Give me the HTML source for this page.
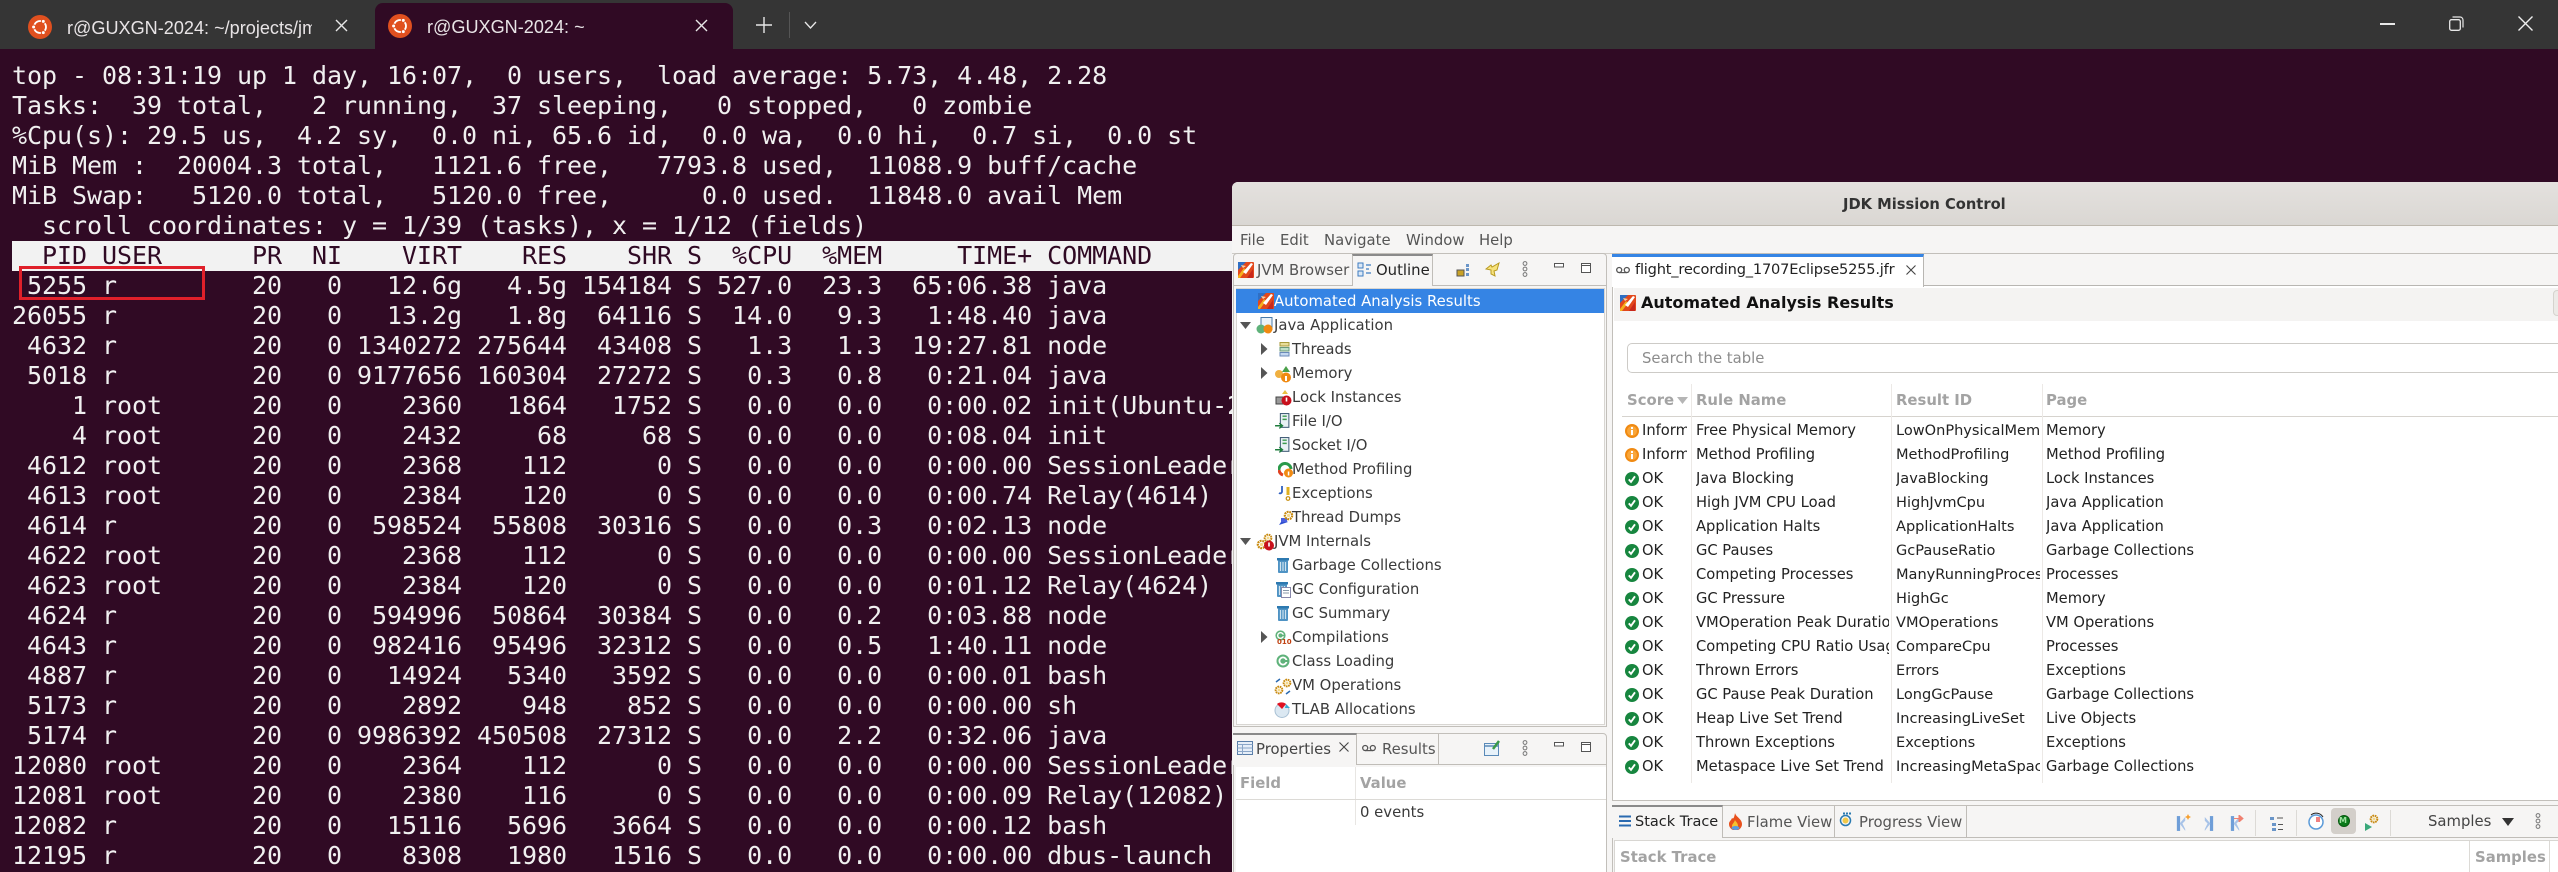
<!DOCTYPE html>
<html><head><meta charset="utf-8"><title>top - JDK Mission Control</title>
<style>
html,body{margin:0;padding:0;width:2558px;height:862px;overflow:hidden;background:#300a24}
*{box-sizing:border-box}
.abs,.t,svg.i{position:absolute}
#tabs{position:absolute;left:0;top:0;width:2558px;height:49px;background:#353535}
#tab2{position:absolute;left:375px;top:3px;width:358px;height:47px;background:#300a24;border-radius:8px 8px 0 0}
.tt{position:absolute;top:14px;font:18.1px/28px "Liberation Sans",sans-serif;color:#e8e4e6;white-space:pre;overflow:hidden}
#term{position:absolute;left:12px;top:61px;margin:0;font:25px/30px "DejaVu Sans Mono","Liberation Mono",monospace;letter-spacing:-.05px;color:#f0f0f0;white-space:pre}
#term b{font-weight:400;display:inline-block;width:1225px;height:30px;background:#f2f2f2;color:#300a24;vertical-align:top}
#redbox{position:absolute;left:19px;top:266px;width:186px;height:34px;border:3px solid #e0202a}
#win{position:absolute;left:1232px;top:182px;width:1326px;height:690px;background:#f6f5f4;overflow:hidden;border-top-left-radius:6px}
.t{font:14.85px/24px "DejaVu Sans",sans-serif;white-space:pre;color:#3a3a3a}
.h{font-weight:700;color:#a3a3a3}
.line{position:absolute;background:#c0bdb8}
.w{position:absolute;background:#fff}
.clip{overflow:hidden}
.tb{color:#222}
</style></head><body>
<svg width="0" height="0" style="position:absolute">
<defs>
<symbol id="ub" viewBox="0 0 24 24"><circle cx="12" cy="12" r="12" fill="#e0501f"/><circle cx="12" cy="12" r="6" fill="none" stroke="#fff" stroke-width="1.8"/><circle cx="5.6" cy="12" r="2" fill="#fff" stroke="#e0501f"/><circle cx="15.3" cy="6.4" r="2" fill="#fff" stroke="#e0501f"/><circle cx="15.3" cy="17.6" r="2" fill="#fff" stroke="#e0501f"/></symbol>
<symbol id="ok" viewBox="0 0 14 14"><circle cx="7" cy="7" r="7" fill="#17863f"/><path d="M3.8 7.4l2.2 2.5 4-5.6" fill="none" stroke="#fff" stroke-width="1.9"/></symbol>
<symbol id="inf" viewBox="0 0 14 14"><circle cx="7" cy="7" r="7" fill="#f08a12"/><circle cx="7" cy="7" r="5" fill="#f9a63a"/><rect x="6" y="6" width="2" height="5" fill="#fff"/><rect x="6" y="3" width="2" height="2" fill="#fff"/></symbol>
<symbol id="rk" viewBox="0 0 16 16"><rect width="16" height="16" rx="1" fill="#e2481c"/><path d="M0 0h8L0 8z" fill="#2f6fc4"/><path d="M0 14L6 6l2 2-6 8H0z" fill="#f6b01c"/><path d="M5 10l8-9 2 1-7 10z" fill="#fff"/><path d="M9 16l6-9v9z" fill="#c8281c"/><path d="M3 3l5 1-3 2z" fill="#f6d0a0"/></symbol>
<symbol id="tape" viewBox="0 0 14 8"><circle cx="3.2" cy="4" r="2.5" fill="none" stroke="#555" stroke-width="1.3"/><circle cx="10.8" cy="4" r="2.5" fill="none" stroke="#555" stroke-width="1.3"/><path d="M3 6.6h8" stroke="#555" stroke-width="1.2"/></symbol>
<symbol id="dots" viewBox="0 0 6 16"><circle cx="3" cy="2.5" r="1.9" fill="none" stroke="#777"/><circle cx="3" cy="8" r="1.9" fill="none" stroke="#777"/><circle cx="3" cy="13.5" r="1.9" fill="none" stroke="#777"/></symbol>
<symbol id="min" viewBox="0 0 10 5"><rect x=".5" y=".5" width="9" height="3.5" fill="#fff" stroke="#555"/></symbol>
<symbol id="max" viewBox="0 0 10 10"><rect x=".5" y=".5" width="9" height="9" fill="#fff" stroke="#555"/><path d="M.5 2.5h9" stroke="#555"/></symbol>
<symbol id="gc" viewBox="0 0 14 16"><rect x="2" y="3" width="10" height="13" rx="1" fill="#4f93c4"/><path d="M4.5 5v9M7 5v9M9.5 5v9" stroke="#cfe3ef" stroke-width="1.2"/><rect x="1" y="1" width="12" height="2.5" fill="#2d79b0"/></symbol>
<symbol id="gear" viewBox="0 0 12 12"><circle cx="6" cy="6" r="4" fill="none" stroke="#c88a10" stroke-width="2.4" stroke-dasharray="2 .8"/><circle cx="6" cy="6" r="1.8" fill="#f4d98a"/></symbol>
<symbol id="cl" viewBox="0 0 14 14"><circle cx="7" cy="7" r="6.5" fill="#5fb27a"/><circle cx="7" cy="7" r="3.6" fill="none" stroke="#fff" stroke-width="1.8"/><rect x="8" y="6" width="4" height="2" fill="#5fb27a"/></symbol>
<symbol id="file" viewBox="0 0 14 16"><rect x="5" y="0.5" width="8" height="13" fill="#e8f0f4" stroke="#45607a"/><path d="M7 3h4M7 6h4" stroke="#3c9b4e" stroke-width="1.4"/><path d="M0 12h7M4 9.5L7 12l-3 2.500" fill="none" stroke="#1e7d3c" stroke-width="1.3"/></symbol>
<symbol id="k" viewBox="0 0 14 20"><path d="M2 2h3.500v16H2z" fill="#6f9ed8"/><path d="M5 10l6-7v4l-3 3 3 6v2z" fill="#a8c3e8"/></symbol>
</defs></svg>

<div id="tabs">
 <div id="tab2"></div>
 <svg class="i" style="left:28px;top:15px" width="24" height="24"><use href="#ub"/></svg>
 <div class="tt" style="left:67px;width:245px">r@GUXGN-2024: ~/projects/jmc</div>
 <svg class="i" style="left:335px;top:19px" width="13" height="13"><path d="M1 1l11 11M12 1L1 12" stroke="#e8e8e8" stroke-width="1.4"/></svg>
 <svg class="i" style="left:388px;top:14px" width="24" height="24"><use href="#ub"/></svg>
 <div class="tt" style="left:427px;top:13px;width:200px">r@GUXGN-2024: ~</div>
 <svg class="i" style="left:695px;top:19px" width="13" height="13"><path d="M1 1l11 11M12 1L1 12" stroke="#e8e8e8" stroke-width="1.4"/></svg>
 <svg class="i" style="left:756px;top:17px" width="16" height="16"><path d="M8 0v16M0 8h16" stroke="#e8e8e8" stroke-width="1.4"/></svg>
 <div class="abs" style="left:789px;top:12px;width:1px;height:26px;background:#555"></div>
 <svg class="i" style="left:804px;top:21px" width="13" height="8"><path d="M1 1l5.500 6L12 1" fill="none" stroke="#e8e8e8" stroke-width="1.3"/></svg>
 <div class="abs" style="left:2380px;top:23px;width:15px;height:1.500px;background:#e8e8e8"></div>
 <svg class="i" style="left:2449px;top:16px" width="15" height="15"><rect x=".7" y="3.700" width="10.600" height="10.600" rx="1.800" fill="none" stroke="#e8e8e8" stroke-width="1.300"/><path d="M3.500 1h7.500a3 3 0 0 1 3 3v7.500" fill="none" stroke="#e8e8e8" stroke-width="1.200"/></svg>
 <svg class="i" style="left:2518px;top:16px" width="15" height="15"><path d="M.5.500l14 14M14.500.500l-14 14" stroke="#eee" stroke-width="1.400"/></svg>
</div>

<pre id="term">top - 08:31:19 up 1 day, 16:07,  0 users,  load average: 5.73, 4.48, 2.28
Tasks:  39 total,   2 running,  37 sleeping,   0 stopped,   0 zombie
%Cpu(s): 29.5 us,  4.2 sy,  0.0 ni, 65.6 id,  0.0 wa,  0.0 hi,  0.7 si,  0.0 st
MiB Mem :  20004.3 total,   1121.6 free,   7793.8 used,  11088.9 buff/cache
MiB Swap:   5120.0 total,   5120.0 free,      0.0 used.  11848.0 avail Mem
  scroll coordinates: y = 1/39 (tasks), x = 1/12 (fields)
<b>  PID USER      PR  NI    VIRT    RES    SHR S  %CPU  %MEM     TIME+ COMMAND</b>
 5255 r         20   0   12.6g   4.5g 154184 S 527.0  23.3  65:06.38 java
26055 r         20   0   13.2g   1.8g  64116 S  14.0   9.3   1:48.40 java
 4632 r         20   0 1340272 275644  43408 S   1.3   1.3  19:27.81 node
 5018 r         20   0 9177656 160304  27272 S   0.3   0.8   0:21.04 java
    1 root      20   0    2360   1864   1752 S   0.0   0.0   0:00.02 init(Ubuntu-2
    4 root      20   0    2432     68     68 S   0.0   0.0   0:08.04 init
 4612 root      20   0    2368    112      0 S   0.0   0.0   0:00.00 SessionLeader
 4613 root      20   0    2384    120      0 S   0.0   0.0   0:00.74 Relay(4614)
 4614 r         20   0  598524  55808  30316 S   0.0   0.3   0:02.13 node
 4622 root      20   0    2368    112      0 S   0.0   0.0   0:00.00 SessionLeader
 4623 root      20   0    2384    120      0 S   0.0   0.0   0:01.12 Relay(4624)
 4624 r         20   0  594996  50864  30384 S   0.0   0.2   0:03.88 node
 4643 r         20   0  982416  95496  32312 S   0.0   0.5   1:40.11 node
 4887 r         20   0   14924   5340   3592 S   0.0   0.0   0:00.01 bash
 5173 r         20   0    2892    948    852 S   0.0   0.0   0:00.00 sh
 5174 r         20   0 9986392 450508  27312 S   0.0   2.2   0:32.06 java
12080 root      20   0    2364    112      0 S   0.0   0.0   0:00.00 SessionLeader
12081 root      20   0    2380    116      0 S   0.0   0.0   0:00.09 Relay(12082)
12082 r         20   0   15116   5696   3664 S   0.0   0.0   0:00.12 bash
12195 r         20   0    8308   1980   1516 S   0.0   0.0   0:00.00 dbus-launch</pre>
<div id="redbox"></div>

<div id="win">
 <!-- coordinates inside: x-1232, y-182 -->
 <div class="abs" style="left:0;top:0;width:1326px;height:44px;background:linear-gradient(#e4e1de,#dad7d3);border-bottom:1px solid #bdb8ae"></div>
 <div class="t" style="left:611px;top:11px;font-weight:700;color:#333;font-size:14.7px">JDK Mission Control</div>
 <div class="t" style="left:8px;top:46px;color:#555">File</div>
 <div class="t" style="left:48px;top:46px;color:#555">Edit</div>
 <div class="t" style="left:92px;top:46px;color:#555">Navigate</div>
 <div class="t" style="left:174px;top:46px;color:#555">Window</div>
 <div class="t" style="left:247px;top:46px;color:#555">Help</div>
 <div class="line" style="left:0;top:71px;width:1326px;height:1px;background:#cfccc7"></div>

 <!-- top-left panel -->
 <div class="abs" style="left:1px;top:71px;width:374px;height:474px;border:1px solid #c2bfba;border-radius:4px 4px 0 0"></div>
 <div class="line" style="left:1px;top:103px;width:374px;height:1px"></div>
 <svg class="i" style="left:6px;top:80px" width="16" height="16"><use href="#rk"/></svg>
 <div class="t" style="left:25px;top:76px;color:#555">JVM Browser</div>
 <div class="abs" style="left:120px;top:72px;width:81px;height:32px;background:#f6f5f4;border-right:1px solid #c0bdb8;border-left:1px solid #c0bdb8;border-top:2px solid #8a8a8a"></div>
 <svg class="i" style="left:125px;top:80px" width="15" height="16"><path d="M1 1h5v5H1zM1 9h5v5H1z" fill="#dbe8f6" stroke="#3d7cc0"/><path d="M9 3h5M9 11h5M9 7h3" stroke="#3d7cc0" stroke-width="1.200"/></svg>
 <div class="t" style="left:144px;top:76px;color:#222">Outline</div>
 <svg class="i" style="left:224px;top:80px" width="16" height="16"><rect x="1" y="8" width="7" height="6" fill="#c9a227" stroke="#555"/><path d="M10 2h3v3h-3zM10 6h3v3h-3zM10 11h3v3h-3z" fill="#6a95c8"/></svg>
 <svg class="i" style="left:253px;top:80px" width="16" height="15"><path d="M1 7l5-4 1 2 7-4-2 7-3 1 1 5-4-2 0-4z" fill="#f7e27c" stroke="#b89a20"/></svg>
 <svg class="i" style="left:290px;top:79px" width="6" height="16"><use href="#dots"/></svg>
 <svg class="i" style="left:322px;top:81px" width="10" height="5"><use href="#min"/></svg>
 <svg class="i" style="left:349px;top:81px" width="10" height="10"><use href="#max"/></svg>

 <div class="w" style="left:4px;top:106px;width:369px;height:437px;border:1px solid #d8d6d2"></div>
 <div class="abs" style="left:4px;top:107px;width:368px;height:24px;background:#3584e4"></div>
 <svg class="i" style="left:26px;top:111px" width="16" height="16"><use href="#rk"/></svg>
 <div class="t" style="left:42px;top:107px;color:#fff">Automated Analysis Results</div>

 <svg class="i" style="left:8px;top:140px" width="12" height="7"><path d="M0 0h11L5.500 7z" fill="#555"/></svg>
 <svg class="i" style="left:24px;top:135px" width="17" height="17"><rect x="5" y="0.500" width="11" height="12" fill="#eaf2f8" stroke="#4a7aa8"/><circle cx="5" cy="12" r="4.500" fill="#5fb27a"/><circle cx="12" cy="12" r="4.500" fill="#f08a12"/></svg>
 <div class="t" style="left:42px;top:131px">Java Application</div>

 <svg class="i" style="left:29px;top:161px" width="7" height="12"><path d="M0 0l6.500 6L0 12z" fill="#555"/></svg>
 <svg class="i" style="left:47px;top:160px" width="13" height="15"><rect x="1" y="0.500" width="9" height="3.500" fill="#e8dd9a" stroke="#a89a3a"/><rect x="1" y="5.500" width="9" height="3.500" fill="#bfe0c8" stroke="#6a9a7a"/><rect x="1" y="10.500" width="9" height="3.500" fill="#c4d8f0" stroke="#6a8ab8"/></svg>
 <div class="t" style="left:60px;top:155px">Threads</div>

 <svg class="i" style="left:29px;top:185px" width="7" height="12"><path d="M0 0l6.500 6L0 12z" fill="#555"/></svg>
 <svg class="i" style="left:42px;top:183px" width="18" height="18"><circle cx="5" cy="9" r="4" fill="#f0b040"/><path d="M8 7l4-6 4 6z" fill="#4aa04a"/><circle cx="12" cy="12.500" r="5" fill="#f08a12"/><rect x="11" y="11" width="2" height="5" fill="#fff"/></svg>
 <div class="t" style="left:60px;top:179px">Memory</div>

 <svg class="i" style="left:43px;top:207px" width="17" height="17"><rect x="1" y="8" width="8" height="7" fill="#999" stroke="#444"/><path d="M7 5l3-4 3 4z" fill="#e8c040"/><circle cx="11.500" cy="11.500" r="5" fill="#c8101c"/><rect x="10.700" y="8.500" width="1.600" height="4" fill="#fff"/></svg>
 <div class="t" style="left:60px;top:203px">Lock Instances</div>

 <svg class="i" style="left:43px;top:231px" width="15" height="17"><use href="#file"/></svg>
 <div class="t" style="left:60px;top:227px">File I/O</div>
 <svg class="i" style="left:43px;top:255px" width="15" height="17"><use href="#file"/></svg>
 <div class="t" style="left:60px;top:251px">Socket I/O</div>

 <svg class="i" style="left:46px;top:280px" width="15" height="16"><path d="M1 8a6 6 0 0 1 12-1" fill="none" stroke="#2a9a4a" stroke-width="3"/><path d="M1 8a6 6 0 0 0 4 5" fill="none" stroke="#e04020" stroke-width="3"/><circle cx="10.500" cy="11" r="4.500" fill="#f08a12"/><rect x="9.800" y="9.500" width="1.500" height="4" fill="#fff"/></svg>
 <div class="t" style="left:60px;top:275px">Method Profiling</div>

 <svg class="i" style="left:46px;top:302px" width="14" height="18"><path d="M4 2v6a2 2 0 0 1-3 1" fill="none" stroke="#3060c0" stroke-width="1.800"/><path d="M10 3v8" stroke="#e0b020" stroke-width="3"/><circle cx="10" cy="14.500" r="1.800" fill="none" stroke="#c89010" stroke-width="1.200"/></svg>
 <div class="t" style="left:60px;top:299px">Exceptions</div>

 <svg class="i" style="left:46px;top:328px" width="16" height="16"><path d="M1 15l4-6 5 3z" fill="#3050d0"/><rect x="3" y="8" width="6" height="4" fill="#4a60e0"/><g transform="translate(5 0)"><svg width="11" height="11"><use href="#gear"/></svg></g></svg>
 <div class="t" style="left:60px;top:323px">Thread Dumps</div>

 <svg class="i" style="left:8px;top:356px" width="12" height="7"><path d="M0 0h11L5.500 7z" fill="#555"/></svg>
 <svg class="i" style="left:24px;top:351px" width="18" height="18"><g transform="translate(0 6)"><svg width="11" height="11"><use href="#gear"/></svg></g><g transform="translate(7 0)"><svg width="10" height="10"><use href="#gear"/></svg></g><circle cx="13" cy="12.500" r="5" fill="#c8101c"/><rect x="12.200" y="9.500" width="1.600" height="4" fill="#fff"/></svg>
 <div class="t" style="left:42px;top:347px">JVM Internals</div>

 <svg class="i" style="left:44px;top:375px" width="14" height="16"><use href="#gc"/></svg>
 <div class="t" style="left:60px;top:371px">Garbage Collections</div>
 <svg class="i" style="left:43px;top:399px" width="14" height="16"><use href="#gc"/></svg>
 <svg class="i" style="left:49px;top:405px" width="10" height="11"><rect x=".5" y=".5" width="9" height="10" fill="#fff" stroke="#88a"/><path d="M2 3.500h6M2 6h6" stroke="#89a"/></svg>
 <div class="t" style="left:60px;top:395px">GC Configuration</div>
 <svg class="i" style="left:44px;top:423px" width="14" height="16"><use href="#gc"/></svg>
 <div class="t" style="left:60px;top:419px">GC Summary</div>

 <svg class="i" style="left:29px;top:449px" width="7" height="12"><path d="M0 0l6.500 6L0 12z" fill="#555"/></svg>
 <svg class="i" style="left:43px;top:448px" width="11" height="11"><use href="#cl"/></svg>
 <div class="t" style="left:45px;top:456px;font:700 7px/9px 'DejaVu Sans',sans-serif;color:#c04010">010</div>
 <div class="t" style="left:60px;top:443px">Compilations</div>

 <svg class="i" style="left:44px;top:472px" width="14" height="14"><use href="#cl"/></svg>
 <div class="t" style="left:60px;top:467px">Class Loading</div>

 <svg class="i" style="left:42px;top:496px" width="18" height="18"><g transform="translate(0 7)"><svg width="10" height="10"><use href="#gear"/></svg></g><g transform="translate(8 0)"><svg width="10" height="10"><use href="#gear"/></svg></g><path d="M2 4l4-3M12 16l4-3" stroke="#2a6ab0" stroke-width="1.500"/></svg>
 <div class="t" style="left:60px;top:491px">VM Operations</div>

 <svg class="i" style="left:42px;top:519px" width="17" height="17"><circle cx="8" cy="9.500" r="7" fill="#dbe8f2" stroke="#a8c0d4"/><path d="M3 3a7 7 0 0 1 9 0L8 8z" fill="#e01020"/><path d="M12 3l4 4h-5z" fill="#3aa8d0"/></svg>
 <div class="t" style="left:60px;top:515px">TLAB Allocations</div>

 <!-- bottom-left panel -->
 <div class="abs" style="left:1px;top:551px;width:374px;height:150px;border:1px solid #c2bfba;border-radius:4px 4px 0 0"></div>
 <div class="line" style="left:1px;top:582px;width:374px;height:1px"></div>
 <div class="abs" style="left:1px;top:551px;width:124px;height:32px;border-top:2px solid #8a8a8a;border-right:1px solid #c0bdb8;background:#f6f5f4"></div>
 <svg class="i" style="left:5px;top:559px" width="16" height="14"><rect x=".5" y=".5" width="15" height="13" fill="#e6eef8" stroke="#5a7ea8"/><path d="M.5 3.500h15M5.500 3.500v10M.5 7h15M.5 10.500h15" stroke="#8aa6c8"/></svg>
 <div class="t" style="left:24px;top:555px;color:#444">Properties</div>
 <svg class="i" style="left:107px;top:560px" width="10" height="10"><path d="M.5.500l9 9M9.500.500l-9 9" stroke="#444" stroke-width="1.100"/></svg>
 <svg class="i" style="left:130px;top:562px" width="14" height="8"><use href="#tape"/></svg>
 <div class="t" style="left:150px;top:555px;color:#555">Results</div>
 <div class="abs" style="left:206px;top:552px;width:1px;height:31px;background:#c0bdb8"></div>
 <svg class="i" style="left:252px;top:558px" width="17" height="16"><rect x=".5" y="3.500" width="14" height="12" fill="#e8f2fa" stroke="#5a8ab8"/><path d="M.5 6h14" stroke="#5a8ab8" stroke-width="1.500"/><path d="M9 9l6-8" stroke="#3a9a4a" stroke-width="2.500"/></svg>
 <svg class="i" style="left:290px;top:558px" width="6" height="16"><use href="#dots"/></svg>
 <svg class="i" style="left:322px;top:560px" width="10" height="5"><use href="#min"/></svg>
 <svg class="i" style="left:349px;top:560px" width="10" height="10"><use href="#max"/></svg>

 <div class="w" style="left:4px;top:585px;width:370px;height:105px"></div>
 <div class="t h" style="left:8px;top:589px">Field</div>
 <div class="t h" style="left:128px;top:589px">Value</div>
 <div class="abs" style="left:123px;top:585px;width:1px;height:58px;background:#e8e6e3"></div>
 <div class="abs" style="left:4px;top:617px;width:370px;height:1px;background:#dcdad6"></div>
 <div class="t" style="left:128px;top:618px">0 events</div>

 <!-- editor panel -->
 <div class="abs" style="left:380px;top:71px;width:946px;height:548px;border:1px solid #c2bfba;background:#fff;border-right:0"></div>
 <div class="abs" style="left:381px;top:72px;width:945px;height:32px;background:#f6f5f4;border-bottom:1px solid #b8b6b2"></div>
 <div class="abs" style="left:380px;top:72px;width:312px;height:33px;background:#fff;border-right:1px solid #b8b6b2;border-top:3px solid #3584e4"></div>
 <svg class="i" style="left:384px;top:84px" width="14" height="8"><use href="#tape"/></svg>
 <div class="t tb" style="left:403px;top:76px;font-size:14.6px;letter-spacing:-.2px">flight_recording_1707Eclipse5255.jfr</div>
 <svg class="i" style="left:674px;top:83px" width="10" height="10"><path d="M.5.500l9 9M9.500.500l-9 9" stroke="#444" stroke-width="1.100"/></svg>

 <div class="abs" style="left:382px;top:106px;width:944px;height:33px;background:#f4f3f2"></div>
 <div class="abs" style="left:1321px;top:108px;width:10px;height:26px;border:1px solid #d5d3ce;border-radius:4px;background:#eceae7"></div>
 <svg class="i" style="left:388px;top:113px" width="16" height="16"><use href="#rk"/></svg>
 <div class="t" style="left:409px;top:109px;font-weight:700;color:#111;font-size:16px">Automated Analysis Results</div>

 <div class="abs" style="left:395px;top:161px;width:940px;height:30px;border:1px solid #cdcbc7;border-radius:5px;background:#fff"></div>
 <div class="t" style="left:410px;top:164px;color:#8c8c8c">Search the table</div>

 <div class="t h" style="left:395px;top:206px">Score</div>
 <svg class="i" style="left:445px;top:215px" width="12" height="7"><path d="M0 0h11L5.500 7z" fill="#b5b5b5"/></svg>
 <div class="t h" style="left:464px;top:206px">Rule Name</div>
 <div class="t h" style="left:664px;top:206px">Result ID</div>
 <div class="t h" style="left:814px;top:206px">Page</div>
 <div class="abs" style="left:390px;top:234px;width:936px;height:1px;background:#d6d3ce"></div>
 <div class="abs" style="left:459px;top:202px;width:1px;height:399px;background:#ece9e6"></div>
 <div class="abs" style="left:659px;top:202px;width:1px;height:399px;background:#ece9e6"></div>
 <div class="abs" style="left:810px;top:202px;width:1px;height:399px;background:#ece9e6"></div>

 <div id="rows" style="position:absolute;left:0;top:0">
<style>
#rows div{position:absolute;font:14.7px/24px "DejaVu Sans",sans-serif;color:#222;white-space:pre;overflow:hidden;height:24px}
#rows .s{left:410px;width:45px}#rows .n{left:464px;width:193px}#rows .d{left:664px;width:144px;font-size:14.55px}#rows .p{left:814px;width:300px}
#rows svg{position:absolute;left:393px}
</style>
<svg style="top:242px" width="14" height="14"><use href="#inf"/></svg><div class="s" style="top:237px">Information</div><div class="n" style="top:237px">Free Physical Memory</div><div class="d" style="top:237px">LowOnPhysicalMemory</div><div class="p" style="top:237px">Memory</div>
<svg style="top:266px" width="14" height="14"><use href="#inf"/></svg><div class="s" style="top:261px">Information</div><div class="n" style="top:261px">Method Profiling</div><div class="d" style="top:261px">MethodProfiling</div><div class="p" style="top:261px">Method Profiling</div>
<svg style="top:290px" width="14" height="14"><use href="#ok"/></svg><div class="s" style="top:285px">OK</div><div class="n" style="top:285px">Java Blocking</div><div class="d" style="top:285px">JavaBlocking</div><div class="p" style="top:285px">Lock Instances</div>
<svg style="top:314px" width="14" height="14"><use href="#ok"/></svg><div class="s" style="top:309px">OK</div><div class="n" style="top:309px">High JVM CPU Load</div><div class="d" style="top:309px">HighJvmCpu</div><div class="p" style="top:309px">Java Application</div>
<svg style="top:338px" width="14" height="14"><use href="#ok"/></svg><div class="s" style="top:333px">OK</div><div class="n" style="top:333px">Application Halts</div><div class="d" style="top:333px">ApplicationHalts</div><div class="p" style="top:333px">Java Application</div>
<svg style="top:362px" width="14" height="14"><use href="#ok"/></svg><div class="s" style="top:357px">OK</div><div class="n" style="top:357px">GC Pauses</div><div class="d" style="top:357px">GcPauseRatio</div><div class="p" style="top:357px">Garbage Collections</div>
<svg style="top:386px" width="14" height="14"><use href="#ok"/></svg><div class="s" style="top:381px">OK</div><div class="n" style="top:381px">Competing Processes</div><div class="d" style="top:381px">ManyRunningProcesses</div><div class="p" style="top:381px">Processes</div>
<svg style="top:410px" width="14" height="14"><use href="#ok"/></svg><div class="s" style="top:405px">OK</div><div class="n" style="top:405px">GC Pressure</div><div class="d" style="top:405px">HighGc</div><div class="p" style="top:405px">Memory</div>
<svg style="top:434px" width="14" height="14"><use href="#ok"/></svg><div class="s" style="top:429px">OK</div><div class="n" style="top:429px">VMOperation Peak Duration</div><div class="d" style="top:429px">VMOperations</div><div class="p" style="top:429px">VM Operations</div>
<svg style="top:458px" width="14" height="14"><use href="#ok"/></svg><div class="s" style="top:453px">OK</div><div class="n" style="top:453px">Competing CPU Ratio Usage</div><div class="d" style="top:453px">CompareCpu</div><div class="p" style="top:453px">Processes</div>
<svg style="top:482px" width="14" height="14"><use href="#ok"/></svg><div class="s" style="top:477px">OK</div><div class="n" style="top:477px">Thrown Errors</div><div class="d" style="top:477px">Errors</div><div class="p" style="top:477px">Exceptions</div>
<svg style="top:506px" width="14" height="14"><use href="#ok"/></svg><div class="s" style="top:501px">OK</div><div class="n" style="top:501px">GC Pause Peak Duration</div><div class="d" style="top:501px">LongGcPause</div><div class="p" style="top:501px">Garbage Collections</div>
<svg style="top:530px" width="14" height="14"><use href="#ok"/></svg><div class="s" style="top:525px">OK</div><div class="n" style="top:525px">Heap Live Set Trend</div><div class="d" style="top:525px">IncreasingLiveSet</div><div class="p" style="top:525px">Live Objects</div>
<svg style="top:554px" width="14" height="14"><use href="#ok"/></svg><div class="s" style="top:549px">OK</div><div class="n" style="top:549px">Thrown Exceptions</div><div class="d" style="top:549px">Exceptions</div><div class="p" style="top:549px">Exceptions</div>
<svg style="top:578px" width="14" height="14"><use href="#ok"/></svg><div class="s" style="top:573px">OK</div><div class="n" style="top:573px">Metaspace Live Set Trend</div><div class="d" style="top:573px">IncreasingMetaSpace</div><div class="p" style="top:573px">Garbage Collections</div>
 </div>

 <!-- bottom panel -->
 <div class="abs" style="left:380px;top:623px;width:946px;height:70px;border:1px solid #c2bfba;border-right:0;background:#f6f5f4"></div>
 <div class="line" style="left:380px;top:655px;width:946px;height:1px"></div>
 <div class="abs" style="left:380px;top:623px;width:111px;height:33px;background:#f6f5f4;border-top:2px solid #8a8a8a;border-right:1px solid #c0bdb8"></div>
 <div class="abs" style="left:602px;top:624px;width:1px;height:31px;background:#c0bdb8"></div>
 <div class="abs" style="left:734px;top:624px;width:1px;height:31px;background:#c0bdb8"></div>
 <svg class="i" style="left:387px;top:633px" width="12" height="12"><path d="M0 1.500h12M0 6h12M0 10.500h12" stroke="#2a6ab0" stroke-width="2"/></svg>
 <div class="t tb" style="left:403px;top:628px;font-size:14.5px">Stack Trace</div>
 <svg class="i" style="left:496px;top:631px" width="15" height="17"><path d="M7 0c1 4 7 6 7 11a6 6 0 0 1-13 0c0-3 2-3 3-6 1 1 2 1 3-5z" fill="#e8501c"/><path d="M7 7c1 2 3 3 3 6a3 3 0 0 1-6 0c0-2 2-3 3-6z" fill="#f6c030"/><ellipse cx="7.500" cy="15" rx="4" ry="2" fill="#5a9ae0"/></svg>
 <div class="t" style="left:515px;top:628px;color:#555">Flame View</div>
 <svg class="i" style="left:607px;top:630px" width="15" height="15"><circle cx="6.500" cy="8.500" r="5" fill="none" stroke="#2a7ab0" stroke-width="1.500"/><circle cx="6.500" cy="8.500" r="3" fill="#f0c848"/><path d="M4 1.500h9" stroke="#2a7ab0" stroke-width="2" stroke-dasharray="2 1"/></svg>
 <div class="t" style="left:627px;top:628px;color:#555">Progress View</div>

 <svg class="i" style="left:943px;top:632px" width="13" height="19"><use href="#k"/></svg>
 <svg class="i" style="left:953px;top:632px" width="6" height="6"><path d="M3 0l1 2 2 1-2 1-1 2-1-2-2-1 2-1z" fill="#f6a030"/></svg>
 <svg class="i" style="left:970px;top:632px" width="13" height="19"><g transform="matrix(-1 0 0 1 13 0)"><use href="#k" width="13" height="19"/></g></svg>
 <svg class="i" style="left:997px;top:632px" width="13" height="19"><use href="#k"/></svg>
 <svg class="i" style="left:1002px;top:633px" width="10" height="7"><path d="M0 3.500h5M5 0l4 3.500L5 7z" fill="#f08070" stroke="#f08070"/></svg>
 <div class="abs" style="left:1023px;top:628px;width:1px;height:26px;background:#dcdad6"></div>
 <svg class="i" style="left:1037px;top:633px" width="14" height="17"><path d="M1 2h4v3H1zM3 8h4v3H3zM3 13h4v3H3z" fill="#6a95c8"/><path d="M8 3h6M9 9.500h5M9 14.500h5" stroke="#555"/></svg>
 <div class="abs" style="left:1064px;top:628px;width:1px;height:26px;background:#dcdad6"></div>
 <svg class="i" style="left:1076px;top:630px" width="17" height="18"><circle cx="8" cy="10" r="7" fill="#fff" stroke="#5a9ad8" stroke-width="1.500"/><path d="M8 10V5h4v5z" fill="#f08080"/><path d="M3 3a8 8 0 0 1 12 2" fill="none" stroke="#222"/></svg>
 <div class="abs" style="left:1099px;top:626px;width:25px;height:26px;background:#d3cfca;border-radius:4px"></div>
 <div class="abs" style="left:1106px;top:633px;width:12px;height:12px;background:#0a7a1a;border-radius:50%;border:1px solid #075a10"></div>
 <div class="t" style="left:1107px;top:633px;font:700 8px/12px 'DejaVu Sans',sans-serif;color:#9fe0a0">M</div>
 <svg class="i" style="left:1132px;top:632px" width="16" height="18"><path d="M1 9l7 4-7 4z" fill="#3aa87a"/><g transform="translate(5 0)"><svg width="10" height="10"><use href="#gear"/></svg></g></svg>
 <div class="abs" style="left:1158px;top:628px;width:1px;height:26px;background:#dcdad6"></div>
 <div class="t" style="left:1196px;top:627px;color:#444">Samples</div>
 <svg class="i" style="left:1270px;top:636px" width="13" height="8"><path d="M0 0h12L6 8z" fill="#333"/></svg>
 <svg class="i" style="left:1303px;top:631px" width="6" height="16"><use href="#dots"/></svg>

 <div class="w" style="left:382px;top:658px;width:944px;height:40px;border-left:1px solid #d8d6d2;border-top:1px solid #d8d6d2"></div>
 <div class="t h" style="left:388px;top:663px">Stack Trace</div>
 <div class="abs" style="left:1237px;top:659px;width:1px;height:31px;background:#dcdad6"></div>
 <div class="t h" style="left:1243px;top:663px">Samples</div>
 <div class="abs" style="left:1317px;top:659px;width:1px;height:31px;background:#dcdad6"></div>
</div>
</body></html>
